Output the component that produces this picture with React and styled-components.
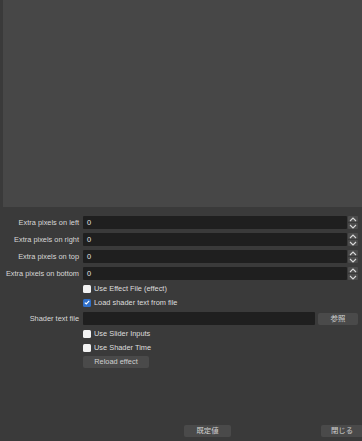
import React from "react";
import styled, { createGlobalStyle } from "styled-components";

const GlobalStyle = createGlobalStyle`
  html, body {
    margin: 0;
    padding: 0;
    background: #3a3a3a;
  }
  body {
    font-family: "Liberation Sans", "Noto Sans CJK JP", sans-serif;
  }
`;

const spinFields = [
  "Extra pixels on left",
  "Extra pixels on right",
  "Extra pixels on top",
  "Extra pixels on bottom",
];

const Chevron = ({ up }) => (
  <svg width="8" height="5" viewBox="0 0 8 5">
    <path
      d={up ? "M1 4 L4 1 L7 4" : "M1 1 L4 4 L7 1"}
      fill="none"
      stroke="#d8d8d8"
      strokeWidth="1.1"
    />
  </svg>
);

const App = () => {
  return (
    <>
      <GlobalStyle />
      <Window>
        <Preview />
        <Form>
          {spinFields.map((label) => (
            <Row key={label} $mb={4}>
              <Label>{label}</Label>
              <Field>
                <Input>0</Input>
                <Spinner>
                  <SpinButton>
                    <Chevron up />
                  </SpinButton>
                  <SpinButton>
                    <Chevron />
                  </SpinButton>
                </Spinner>
              </Field>
            </Row>
          ))}
          <CheckRow $mb={6}>
            <span />
            <Check>
              <Box />
              Use Effect File (effect)
            </Check>
          </CheckRow>
          <CheckRow $mb={6}>
            <span />
            <Check>
              <Box $checked>
                <svg width="6" height="5" viewBox="0 0 6 5">
                  <path
                    d="M0.8 2.6 L2.3 4 L5.2 0.9"
                    fill="none"
                    stroke="#fff"
                    strokeWidth="1.2"
                  />
                </svg>
              </Box>
              Load shader text from file
            </Check>
          </CheckRow>
          <Row $mb={4}>
            <Label>Shader text file</Label>
            <Field>
              <Input $wide />
              <Button $w={40}>参照</Button>
            </Field>
          </Row>
          <CheckRow $mb={6}>
            <span />
            <Check>
              <Box />
              Use Slider Inputs
            </Check>
          </CheckRow>
          <CheckRow $mb={4}>
            <span />
            <Check>
              <Box />
              Use Shader Time
            </Check>
          </CheckRow>
          <Row $mb={0}>
            <span />
            <div>
              <Button $w={66}>Reload effect</Button>
            </div>
          </Row>
        </Form>
        <Footer>
          <Button $w={47}>既定値</Button>
          <Button $w={42}>閉じる</Button>
        </Footer>
      </Window>
    </>
  );
};

const Window = styled.div`
  width: 362px;
  height: 441px;
  display: flex;
  flex-direction: column;
  background: #3a3a3a;
  overflow: hidden;
`;

const Preview = styled.div`
  height: 207px;
  margin-left: 3px;
  background: #474747;
  flex-shrink: 0;
`;

const Form = styled.div`
  display: flex;
  flex-direction: column;
  padding: 9px 4px 0 0;
`;

const Row = styled.div`
  display: grid;
  grid-template-columns: 79px 1fr;
  column-gap: 4px;
  align-items: center;
  height: 13px;
  margin-bottom: ${(p) => p.$mb}px;
`;

const CheckRow = styled(Row)`
  height: 8px;
`;

const Label = styled.div`
  font-size: 7.4px;
  color: #d8d8d8;
  text-align: right;
  white-space: nowrap;
`;

const Field = styled.div`
  display: flex;
  align-items: center;
  gap: 3px;
  height: 13px;
`;

const Input = styled.div`
  flex: 1;
  height: 13px;
  background: #1f1f1f;
  border-radius: 1px;
  color: #e6e6e6;
  font-size: 7.4px;
  line-height: 13px;
  padding-left: 4px;
  box-sizing: border-box;
  margin-right: ${(p) => (p.$wide ? 0 : -2)}px;
`;

const Spinner = styled.div`
  width: 10px;
  display: flex;
  flex-direction: column;
  gap: 1px;
`;

const SpinButton = styled.div`
  height: 6px;
  background: #4c4c4c;
  border-radius: 1px;
  display: flex;
  align-items: center;
  justify-content: center;
`;

const Check = styled.div`
  display: flex;
  align-items: center;
  gap: 3px;
  font-size: 7.4px;
  color: #dedede;
  white-space: nowrap;
`;

const Box = styled.div`
  width: 8px;
  height: 8px;
  border-radius: 1.5px;
  background: ${(p) => (p.$checked ? "#2f6fc9" : "#f2f2f2")};
  display: flex;
  align-items: center;
  justify-content: center;
`;

const Button = styled.div`
  width: ${(p) => p.$w}px;
  height: 12px;
  background: #4a4a4a;
  border-radius: 2px;
  color: #d0d0d0;
  font-size: 7.4px;
  line-height: 12px;
  text-align: center;
  font-family: "Liberation Sans", "Noto Sans CJK JP", sans-serif;
`;

const Footer = styled.div`
  margin-top: auto;
  display: flex;
  justify-content: space-between;
  padding: 0 0 4px 184px;
  margin-right: -1px;
`;

export default App;
